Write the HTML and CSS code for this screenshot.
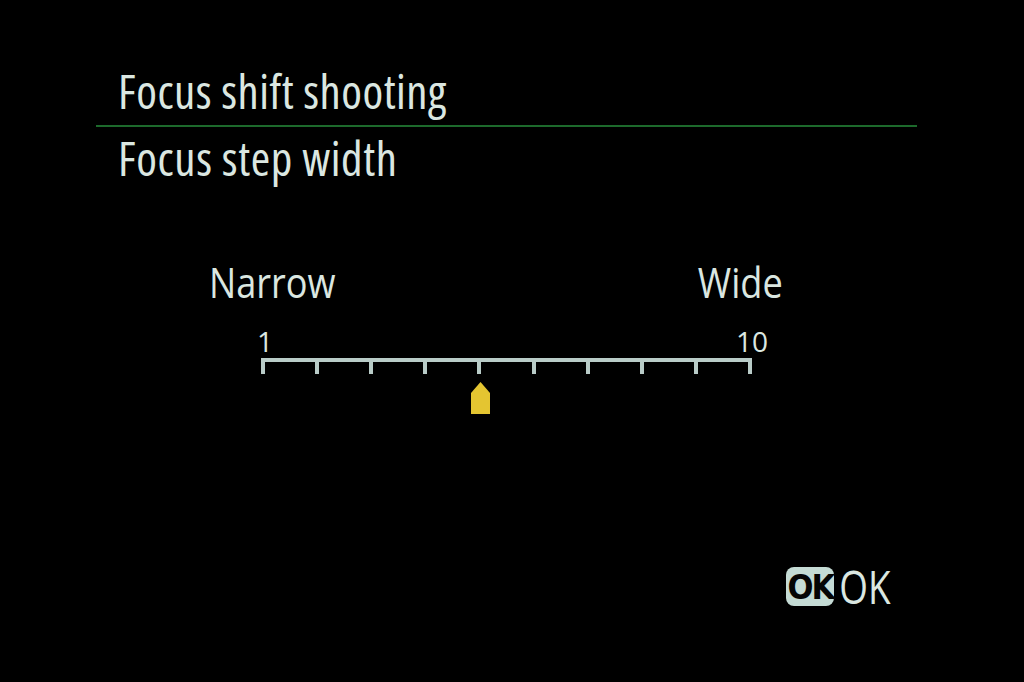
FILE: index.html
```html
<!DOCTYPE html>
<html lang="en">
<head>
    <meta charset="UTF-8">
    <meta name="viewport" content="width=device-width, initial-scale=1.0">
    <title>Focus shift shooting</title>
    <link rel="stylesheet" href="styles.css">
</head>
<body>
    <div class="screen">
        <div class="menu-head">
            <h1 class="menu-title">Focus shift shooting</h1>
        </div>
        <h2 class="item-title">Focus step width</h2>

        <div class="slider">
            <div class="slider-ends">
                <span class="end-min">Narrow</span>
                <span class="end-max">Wide</span>
            </div>
            <div class="scale">
                <div class="scale-nums">
                    <span>1</span>
                    <span>10</span>
                </div>
                <div class="track">
                    <i class="tick"></i><i class="tick"></i><i class="tick"></i><i class="tick"></i><i class="tick"></i>
                    <i class="tick"></i><i class="tick"></i><i class="tick"></i><i class="tick"></i><i class="tick"></i>
                </div>
                <!-- step 5 of 1..10 -->
                <div class="pointer-row">
                    <svg class="pointer" style="margin-left: calc(44.444% - 8px)" width="19" height="32" viewBox="0 0 19 32">
                        <polygon points="9.5,0 19,11 19,32 0,32 0,11" fill="#e4c531"/>
                    </svg>
                </div>
            </div>
        </div>

        <div class="hint">
            <span class="ok-key">OK</span>
            <span class="ok-label">OK</span>
        </div>
    </div>
</body>
</html>
```

FILE: styles.css
```css
html, body { margin: 0; padding: 0; background: #000; }
body { font-family: "Open Sans", "DejaVu Sans", sans-serif; color: #dbe7e1; }
.screen { width: 1024px; height: 682px; display: flex; flex-direction: column; box-sizing: border-box; padding-top: 68px; }

.menu-head { margin-left: 96px; width: 821px; border-bottom: 2px solid #1d6a2c; padding-bottom: 10px; }
.menu-title { margin: 0 0 0 22px; font-size: 47px; font-weight: 400; line-height: 47px; font-stretch: 75%; letter-spacing: 0.5px; }
.item-title { margin: 8px 0 0 118px; font-size: 47px; font-weight: 400; line-height: 47px; font-stretch: 75%; letter-spacing: 0.6px; }

.slider { margin-top: 79px; }
.slider-ends { display: flex; justify-content: space-between; width: 574px; margin-left: 209px; font-size: 42px; line-height: 42px; }
/* labels are narrowed a bit, less than the condensed face */
.slider-ends span { display: inline-block; transform: scaleX(0.86); }
.end-min { transform-origin: left center; }
.end-max { transform-origin: right center; }

.scale { width: 491px; margin-left: 261px; margin-top: 24px; }
.scale-nums { display: flex; justify-content: space-between; margin: 0 -16px 0 -4px; font-size: 28px; line-height: 29px; }
.track { display: flex; justify-content: space-between; height: 12px; margin-top: 2px; border-top: 4px solid #b9ccc8; }
.tick { display: block; width: 4px; height: 12px; background: #b9ccc8; }
.pointer-row { margin-top: 8px; height: 32px; }
.pointer { display: block; }

.hint { margin-top: auto; margin-bottom: 76px; align-self: flex-end; margin-right: 133px; display: flex; align-items: center; gap: 5px; }
.ok-key { display: flex; align-items: center; justify-content: center; width: 48px; height: 39px; border-radius: 8px; background: #c5dbd5; color: #050505; font-family: "DejaVu Sans Condensed", "DejaVu Sans", sans-serif; font-weight: bold; font-size: 34px; letter-spacing: -2px; }
.ok-label { display: inline-block; margin-left: -11px; font-size: 45px; line-height: 39px; transform: scaleX(0.82); transform-origin: right center; }
```
